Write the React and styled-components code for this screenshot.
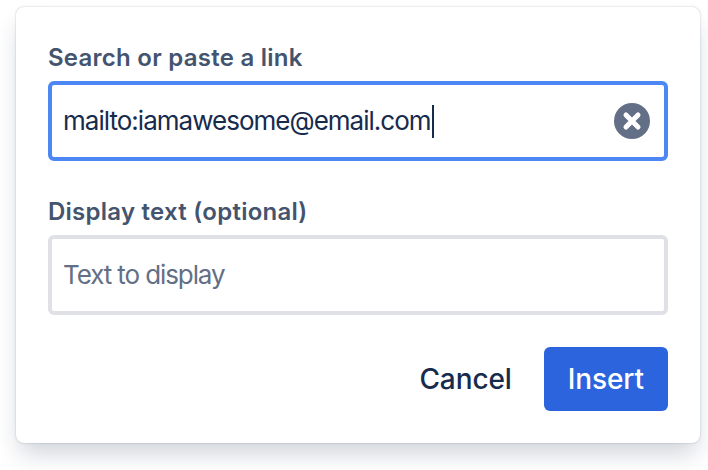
import React from "react";
import styled, { createGlobalStyle } from "styled-components";

const Global = createGlobalStyle`
  html, body { margin: 0; padding: 0; background: #fff; overflow: hidden; }
  body { font-family: Inter, "Liberation Sans", sans-serif; }
`;

const Page = styled.div`
  width: 708px;
  height: 470px;
  box-sizing: border-box;
  padding: 7px 8px 0 16px;
`;

const Card = styled.form`
  box-sizing: border-box;
  width: 684px;
  height: 436px;
  padding: 36px 32px 32px;
  display: flex;
  flex-direction: column;
  background: #fff;
  border-radius: 8px;
  box-shadow: 0 0 2px rgba(9, 30, 66, 0.28), 0 14px 24px -4px rgba(9, 30, 66, 0.2);
`;

const Label = styled.label`
  display: block;
  height: 30px;
  margin-bottom: 8px;
  font-size: 24px;
  line-height: 30px;
  font-weight: 600;
  color: #44546f;
  letter-spacing: 0.25px;
`;

const InputBox = styled.div`
  box-sizing: border-box;
  height: 80px;
  display: flex;
  align-items: center;
  padding: 0 14px 0 11px;
  border: 4px solid ${(p) => (p.$focused ? "#4c87f3" : "#dfe1e6")};
  border-radius: 6px;
  margin-bottom: ${(p) => p.$gap || 0}px;
`;

const Value = styled.span`
  font-size: 26px;
  line-height: 40px;
  color: #172b4d;
  letter-spacing: -0.98px;
  flex: 1;
  display: flex;
  align-items: center;
  white-space: nowrap;
`;

const Placeholder = styled(Value)`
  color: #626f86;
  letter-spacing: -1.1px;
`;

const Caret = styled.i`
  display: block;
  width: 2px;
  height: 33px;
  margin-left: 1px;
  background: #172b4d;
`;

const ClearIcon = styled.svg`
  width: 36px;
  height: 36px;
  display: block;
  flex: none;
`;

const Actions = styled.div`
  display: flex;
  justify-content: flex-end;
  align-items: center;
  gap: 8px;
  margin-top: 32px;
`;

const Button = styled.button`
  box-sizing: border-box;
  height: 64px;
  padding: 0 24px;
  border: 0;
  border-radius: 6px;
  font-family: inherit;
  font-size: 28px;
  font-weight: 500;
  letter-spacing: -0.1px;
  background: ${(p) => (p.$primary ? "#2c64dd" : "transparent")};
  color: ${(p) => (p.$primary ? "#fff" : "#172b4d")};
`;

export default function App() {
  return (
    <Page>
      <Global />
      <Card>
        <Label>Search or paste a link</Label>
        <InputBox $focused $gap={36}>
          <Value>
            mailto:iamawesome@email.com
            <Caret />
          </Value>
          <ClearIcon viewBox="0 0 36 36" aria-hidden="true">
            <circle cx="18" cy="18" r="18" fill="#626f86" />
            <path d="M12 12 L24 24 M24 12 L12 24" stroke="#fff" strokeWidth="5" strokeLinecap="round" />
          </ClearIcon>
        </InputBox>
        <Label>Display text (optional)</Label>
        <InputBox>
          <Placeholder>Text to display</Placeholder>
        </InputBox>
        <Actions>
          <Button type="button">Cancel</Button>
          <Button type="button" $primary>Insert</Button>
        </Actions>
      </Card>
    </Page>
  );
}
